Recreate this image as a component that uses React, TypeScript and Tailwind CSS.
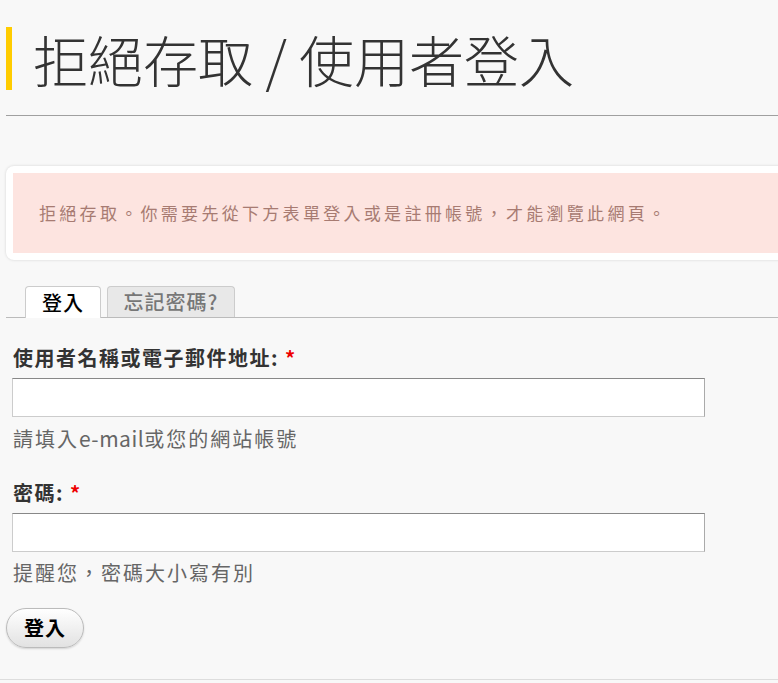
import React from "react";

export default function App() {
  const cjk = { fontFamily: '"Noto Sans CJK TC", "Noto Sans", sans-serif' };
  return (
    <div className="min-h-[683px] w-[778px] overflow-hidden bg-[#f8f8f8]" style={cjk}>
      <div className="pl-[6px] pt-[27px]">
        <div className="flex items-center border-l-[6px] border-[#ffcc00] h-[63px] pl-[21px]">
          <h1 className="text-[55px] font-light leading-none text-[#333] whitespace-nowrap">拒絕存取 / 使用者登入</h1>
        </div>
      </div>
      <div className="mt-[25px] ml-[6px] h-px bg-[#a0a0a0]" />
      <div className="mt-[50px] ml-[6px] w-[800px] rounded-[8px] bg-white p-[7px] shadow-[0_0_3px_rgba(0,0,0,0.15)]">
        <div className="h-[80px] bg-[#fde4e0] pl-[26px] flex items-center text-[17px] text-[#a77b72] tracking-[3.3px]">
          拒絕存取。你需要先從下方表單登入或是註冊帳號，才能瀏覽此網頁。
        </div>
      </div>
      <div className="mt-[25px] ml-[6px] flex items-end gap-[6px] pl-[19px] border-b border-[#bbb] h-[33px]">
        <div className="h-[32px] w-[76px] -mb-px bg-white border border-[#ccc] border-b-0 rounded-t-[4px] flex items-center justify-center text-[20px] font-medium text-black tracking-[1px]">登入</div>
        <div className="h-[31px] w-[128px] bg-[#e8e8e8] border border-[#ccc] border-b-0 rounded-t-[4px] flex items-center justify-center text-[20px] font-medium text-[#777] tracking-[1px]">忘記密碼?</div>
      </div>
      <div className="pl-[12px] pt-[28px]">
        <div className="text-[20px] font-bold text-[#333] leading-[24px] pl-[1px] tracking-[1.5px]">
          使用者名稱或電子郵件地址: <span className="text-[#e00]">*</span>
        </div>
        <div className="mt-[8px] h-[39px] w-[693px] bg-white border border-[#ccc] border-t-[#888] border-r-[#aaa]" />
        <div className="mt-[8px] text-[20px] text-[#666] leading-[26px] pl-[1px] tracking-[2px]">
          請填入<span className="tracking-[0.5px] text-[21px]">e-mail</span>或您的網站帳號
        </div>
        <div className="mt-[29px] text-[20px] font-bold text-[#333] leading-[24px] pl-[1px] tracking-[1.5px]">
          密碼: <span className="text-[#e00]">*</span>
        </div>
        <div className="mt-[8px] h-[39px] w-[693px] bg-white border border-[#ccc] border-t-[#888] border-r-[#aaa]" />
        <div className="mt-[8px] text-[20px] text-[#666] leading-[26px] pl-[1px] tracking-[2px]">提醒您，密碼大小寫有別</div>
      </div>
      <div className="pl-[6px] mt-[22px]">
        <button className="h-[40px] w-[78px] rounded-full border border-[#bbb] bg-gradient-to-b from-white to-[#e2e2e2] text-[20px] font-bold text-black tracking-[1px] shadow-[0_1px_2px_rgba(0,0,0,0.15)]">登入</button>
      </div>
      <div className="mt-[31px] h-px bg-[#ddd]" />
    </div>
  );
}
